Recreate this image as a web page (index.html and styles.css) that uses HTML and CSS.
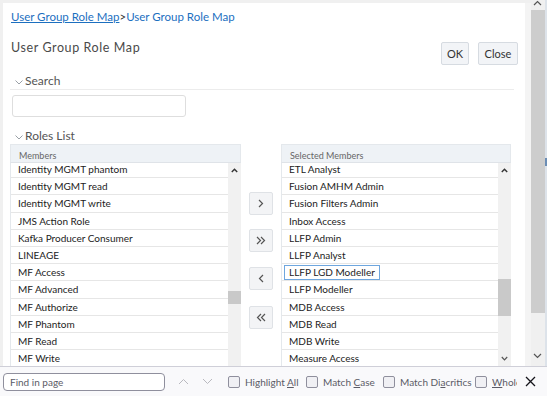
FILE: index.html
```html
<!DOCTYPE html>
<html>
<head>
<meta charset="utf-8">
<link rel="stylesheet" href="styles.css">
</head>
<body>
<div class="window">
  <div class="viewport">
    <div class="main">
      <div class="crumbs"><a class="crumb first">User Group Role Map</a><span class="sep">&gt;</span><a class="crumb">User Group Role Map</a></div>
      <div class="titlebar">
        <h1 class="title">User Group Role Map</h1>
        <div class="actions">
          <button class="btn ok">OK</button>
          <button class="btn close">Close</button>
        </div>
      </div>
      <div class="section-h search-h">
        <svg class="chev" width="8" height="5" viewBox="0 0 8 5"><polyline points="0.5,0.5 4,4 7.5,0.5" fill="none" stroke="#9aa0a6" stroke-width="1"/></svg>
        <span>Search</span>
      </div>
      <div class="search-box"></div>
      <div class="section-h roles-h">
        <svg class="chev" width="8" height="5" viewBox="0 0 8 5"><polyline points="0.5,0.5 4,4 7.5,0.5" fill="none" stroke="#9aa0a6" stroke-width="1"/></svg>
        <span>Roles List</span>
      </div>
      <div class="shuttle">
        <div class="panel left">
          <div class="phead">Members</div>
          <div class="pbody">
            <div class="rows">
              <div class="row">Identity MGMT phantom</div>
              <div class="row">Identity MGMT read</div>
              <div class="row">Identity MGMT write</div>
              <div class="row">JMS Action Role</div>
              <div class="row">Kafka Producer Consumer</div>
              <div class="row">LINEAGE</div>
              <div class="row">MF Access</div>
              <div class="row">MF Advanced</div>
              <div class="row">MF Authorize</div>
              <div class="row">MF Phantom</div>
              <div class="row">MF Read</div>
              <div class="row">MF Write</div>
            </div>
            <div class="lsb left-sb">
              <svg class="sb-up" width="7" height="5" viewBox="0 0 7 5"><polyline points="0.8,4 3.5,1.2 6.2,4" fill="none" stroke="#333" stroke-width="1.4"/></svg>
              <div class="lthumb lthumb-l"></div>
            </div>
          </div>
        </div>
        <div class="mid">
          <button class="mbtn b1"><svg width="6" height="9" viewBox="0 0 6 9"><polyline points="1,1 4.5,4.5 1,8" fill="none" stroke="#555" stroke-width="1.2"/></svg></button>
          <button class="mbtn b2"><svg width="10" height="9" viewBox="0 0 10 9"><polyline points="1,1 4.5,4.5 1,8" fill="none" stroke="#555" stroke-width="1.2"/><polyline points="5,1 8.5,4.5 5,8" fill="none" stroke="#555" stroke-width="1.2"/></svg></button>
          <button class="mbtn b3"><svg width="6" height="9" viewBox="0 0 6 9"><polyline points="5,1 1.5,4.5 5,8" fill="none" stroke="#555" stroke-width="1.2"/></svg></button>
          <button class="mbtn b4"><svg width="10" height="9" viewBox="0 0 10 9"><polyline points="5,1 1.5,4.5 5,8" fill="none" stroke="#555" stroke-width="1.2"/><polyline points="9,1 5.5,4.5 9,8" fill="none" stroke="#555" stroke-width="1.2"/></svg></button>
        </div>
        <div class="panel right">
          <div class="phead">Selected Members</div>
          <div class="pbody">
            <div class="rows">
              <div class="row">ETL Analyst</div>
              <div class="row">Fusion AMHM Admin</div>
              <div class="row">Fusion Filters Admin</div>
              <div class="row">Inbox Access</div>
              <div class="row">LLFP Admin</div>
              <div class="row">LLFP Analyst</div>
              <div class="row"><span class="focus">LLFP LGD Modeller</span></div>
              <div class="row">LLFP Modeller</div>
              <div class="row">MDB Access</div>
              <div class="row">MDB Read</div>
              <div class="row">MDB Write</div>
              <div class="row">Measure Access</div>
            </div>
            <div class="lsb right-sb">
              <svg class="sb-up" width="7" height="5" viewBox="0 0 7 5"><polyline points="0.8,4 3.5,1.2 6.2,4" fill="none" stroke="#333" stroke-width="1.4"/></svg>
              <div class="lthumb lthumb-r"></div>
              <svg class="sb-down" width="7" height="5" viewBox="0 0 7 5"><polyline points="0.8,1 3.5,3.8 6.2,1" fill="none" stroke="#555" stroke-width="1.2"/></svg>
            </div>
          </div>
        </div>
      </div>
    </div>
    <div class="gutter"></div>
    <div class="vscroll">
      <svg class="vs-up" width="9" height="6" viewBox="0 0 9 6"><polyline points="1,5 4.5,1.5 8,5" fill="none" stroke="#555" stroke-width="1.2"/></svg>
      <div class="vthumb"></div>
      <svg class="vs-down" width="9" height="6" viewBox="0 0 9 6"><polyline points="1,1 4.5,4.5 8,1" fill="none" stroke="#555" stroke-width="1.2"/></svg>
    </div>
    <div class="edge"><div class="edge-mark"></div></div>
  </div>
  <div class="findbar">
    <div class="find-input">Find in page</div>
    <svg class="fchev up" width="11" height="7" viewBox="0 0 11 7"><polyline points="1,6 5.5,1.5 10,6" fill="none" stroke="#b9b9bf" stroke-width="1"/></svg>
    <svg class="fchev down" width="11" height="7" viewBox="0 0 11 7"><polyline points="1,1 5.5,5.5 10,1" fill="none" stroke="#b9b9bf" stroke-width="1"/></svg>
    <div class="opt o1"><span class="cb"></span><span>Highlight <u>A</u>ll</span></div>
    <div class="opt o2"><span class="cb"></span><span>Match <u>C</u>ase</span></div>
    <div class="opt o3"><span class="cb"></span><span>Match Di<u>a</u>critics</span></div>
    <div class="opt o4"><span class="cb"></span><span class="clip"><u>W</u>hole</span></div>
    <svg class="fclose" width="11" height="11" viewBox="0 0 11 11"><path d="M1 1 L10 10 M10 1 L1 10" stroke="#15141a" stroke-width="1.3"/></svg>
  </div>
</div>
</body>
</html>
```

FILE: styles.css
```css
* { box-sizing: border-box; }
html, body { margin: 0; padding: 0; }
body {
  width: 547px;
  height: 396px;
  overflow: hidden;
  background: #f0f0f0;
  font-family: Lato, "Liberation Sans", sans-serif;
  color: #222;
}
.window { display: flex; flex-direction: column; width: 547px; height: 396px; }
.viewport { display: flex; height: 366px; overflow: hidden; background: #f0f0f0; }

.main {
  width: 522px;
  margin: 3px 0 0 3px;
  background: #fff;
  padding: 0 0 0 7px;
  overflow: hidden;
}
.crumbs {
  margin-top: 7px;
  padding-left: 1px;
  font-size: 11.5px;
  line-height: 14px;
  color: #1c6fbf;
}
.crumb { color: #1c6fbf; text-decoration: none; }
.crumb.first { text-decoration: underline; }
.sep { color: #333; }

.titlebar {
  display: flex;
  justify-content: space-between;
  align-items: flex-start;
  margin-top: 18px;
  padding-right: 7px;
  height: 23px;
}
.title {
  margin: -2px 0 0 1px;
  font-size: 12.5px;
  line-height: 16px;
  font-weight: normal;
  letter-spacing: 0.6px;
  color: #4a4a4a;
}
.actions { display: flex; gap: 9px; }
.btn {
  height: 23px;
  border: 1px solid #d6dbe1;
  border-radius: 2px;
  background: #f2f4f7;
  font-family: Lato, "Liberation Sans", sans-serif;
  font-size: 11px;
  color: #333;
  padding: 0;
}
.btn.ok { width: 28px; }
.btn.close { width: 40px; }

.section-h {
  display: flex;
  align-items: flex-start;
  gap: 2px;
  margin-right: 11px;
  font-size: 12px;
  line-height: 16px;
  color: #555;
  padding-top: 2px;
}
.section-h .chev { margin-left: 5px; margin-top: 7px; }
.search-h {
  margin-top: 6px;
  height: 19px;
  border-bottom: 1px solid #ececec;
}
.search-box {
  margin: 5px 0 0 2px;
  width: 174px;
  height: 22px;
  border: 1px solid #dedede;
  border-radius: 3px;
}
.roles-h {
  margin-top: 9px;
  height: 18px;
}

.shuttle { display: flex; }
.panel { display: flex; flex-direction: column; }
.panel.left { width: 231px; }
.panel.right { width: 230px; }
.phead {
  height: 19px;
  background: #eef2f6;
  border: 1px solid #e4e8ec;
  border-bottom: 1px solid #dfe3e8;
  padding: 5px 0 0 8px;
  font-size: 9px;
  line-height: 11px;
  color: #666;
}
.pbody {
  display: flex;
  height: 220px;
  border-left: 1px solid #e4e8ec;
  overflow: hidden;
}
.rows { flex: 1; margin-top: -2px; }
.row {
  height: 17.2px;
  border-bottom: 1px solid #e6e6e6;
  padding-left: 7px;
  font-size: 10px;
  line-height: 16px;
  color: #222;
  white-space: nowrap;
}
.focus {
  display: inline-block;
  margin-left: -5px;
  padding: 0 4px;
  line-height: 13px;
  border: 1px solid #6ea6de;
}
.lsb {
  position: relative;
  width: 13px;
  background: #f1f1f1;
}
.sb-up { position: absolute; left: 3px; top: 5px; }
.sb-down { position: absolute; left: 3px; top: 193px; }
.lthumb { position: absolute; left: 0; width: 13px; background: #c9c9c9; }
.lthumb-l { top: 128px; height: 13px; }
.lthumb-r { top: 116px; height: 37px; }

.mid { width: 40px; position: relative; }
.mbtn {
  position: absolute;
  left: 8px;
  width: 24px;
  height: 23px;
  padding: 0;
  border: 1px solid #dfe2e6;
  border-radius: 2px;
  background: #f3f4f6;
  display: flex;
  align-items: center;
  justify-content: center;
}
.b1 { top: 48px; }
.b2 { top: 85px; }
.b3 { top: 123px; }
.b4 { top: 162px; }

.gutter { width: 6px; margin-top: 3px; background: #f4f4f4; }
.vscroll { position: relative; width: 14px; background: #f0f0f0; }
.vs-up { position: absolute; left: 2px; top: 0; }
.vs-down { position: absolute; left: 2px; top: 353px; }
.vthumb { position: absolute; left: 0; top: 10px; width: 14px; height: 303px; background: #cdcdcd; }
.edge { position: relative; width: 2px; background: #dde3ea; }
.edge-mark { position: absolute; top: 158px; width: 2px; height: 8px; background: #6b8db5; }

.findbar {
  position: relative;
  height: 30px;
  background: #f9f9fb;
  border-top: 1px solid #cfcfd8;
  font-size: 10px;
  color: #15141a;
  display: flex;
  align-items: center;
}
.find-input {
  margin-left: 3px;
  width: 162px;
  height: 18px;
  border: 1px solid #8f8f9d;
  border-radius: 4px;
  background: #fff;
  padding-left: 6px;
  line-height: 16px;
  color: #5b5b66;
}
.fchev.up { margin-left: 13px; }
.fchev.down { margin-left: 13px; }
.opt { display: flex; align-items: center; gap: 5px; white-space: nowrap; overflow: hidden; color: #5b5b66; }
.cb {
  flex: none;
  width: 12px;
  height: 12px;
  border: 1px solid #8f8f9d;
  border-radius: 2px;
  background: #f0f0f4;
}
.o1 { margin-left: 15px; width: 78px; }
.o2 { width: 77px; }
.o3 { width: 92px; }
.o4 { width: 42px; }
.clip { overflow: hidden; }
.fclose { margin-left: auto; margin-right: 11px; }
```
